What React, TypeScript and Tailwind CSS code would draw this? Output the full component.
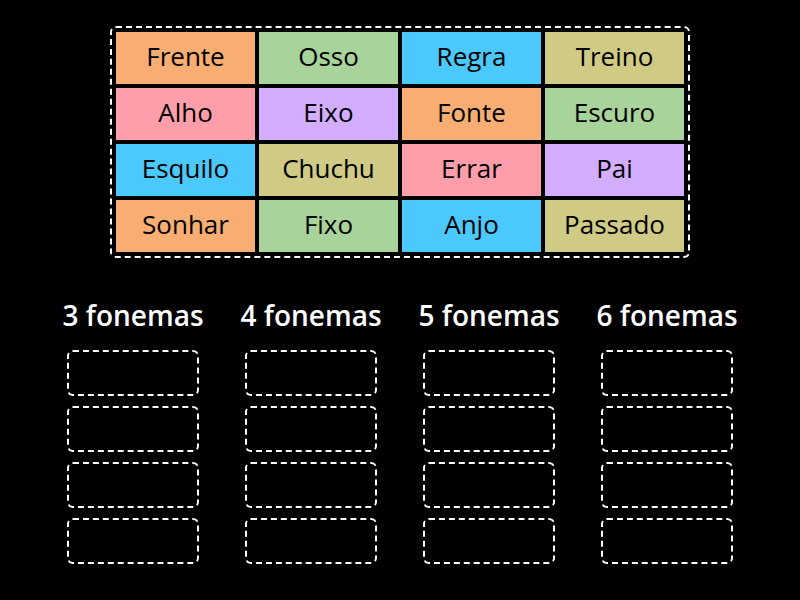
import React from 'react'

const words = [
  { text: 'Frente', color: 'bg-[#f8ae73]' },
  { text: 'Osso', color: 'bg-[#a8d39a]' },
  { text: 'Regra', color: 'bg-[#4cc9fc]' },
  { text: 'Treino', color: 'bg-[#cfca84]' },
  { text: 'Alho', color: 'bg-[#ff9eab]' },
  { text: 'Eixo', color: 'bg-[#d3adff]' },
  { text: 'Fonte', color: 'bg-[#f8ae73]' },
  { text: 'Escuro', color: 'bg-[#a8d39a]' },
  { text: 'Esquilo', color: 'bg-[#4cc9fc]' },
  { text: 'Chuchu', color: 'bg-[#cfca84]' },
  { text: 'Errar', color: 'bg-[#ff9eab]' },
  { text: 'Pai', color: 'bg-[#d3adff]' },
  { text: 'Sonhar', color: 'bg-[#f8ae73]' },
  { text: 'Fixo', color: 'bg-[#a8d39a]' },
  { text: 'Anjo', color: 'bg-[#4cc9fc]' },
  { text: 'Passado', color: 'bg-[#cfca84]' },
]

const groups = ['3 fonemas', '4 fonemas', '5 fonemas', '6 fonemas']

export default function App() {
  return (
    <div className="w-[800px] h-[600px] bg-black overflow-hidden font-['Open_Sans','Noto_Sans',sans-serif]">
      {/* cartões para arrastar */}
      <div className="pt-[26px] flex justify-center">
        <div className="w-[580px] border-2 border-dashed border-white rounded-md p-1">
          <div className="grid grid-cols-4 gap-1">
            {words.map((w) => (
              <div
                key={w.text}
                className={`${w.color} h-[52px] flex items-center justify-center pb-1 text-[26px] font-medium text-black`}
              >
                {w.text}
              </div>
            ))}
          </div>
        </div>
      </div>

      {/* grupos */}
      <div className="mt-[38px] flex gap-[46px] pl-[67px]">
        {groups.map((g) => (
          <div key={g} className="w-[132px] flex flex-col items-center">
            <div className="text-[28px] font-semibold text-white whitespace-nowrap leading-[38px]">{g}</div>
            <div className="mt-[16px] flex flex-col gap-[10px]">
              {[0, 1, 2, 3].map((i) => (
                <div key={i} className="w-[132px] h-[46px] border-2 border-dashed border-white rounded-md" />
              ))}
            </div>
          </div>
        ))}
      </div>
    </div>
  )
}
